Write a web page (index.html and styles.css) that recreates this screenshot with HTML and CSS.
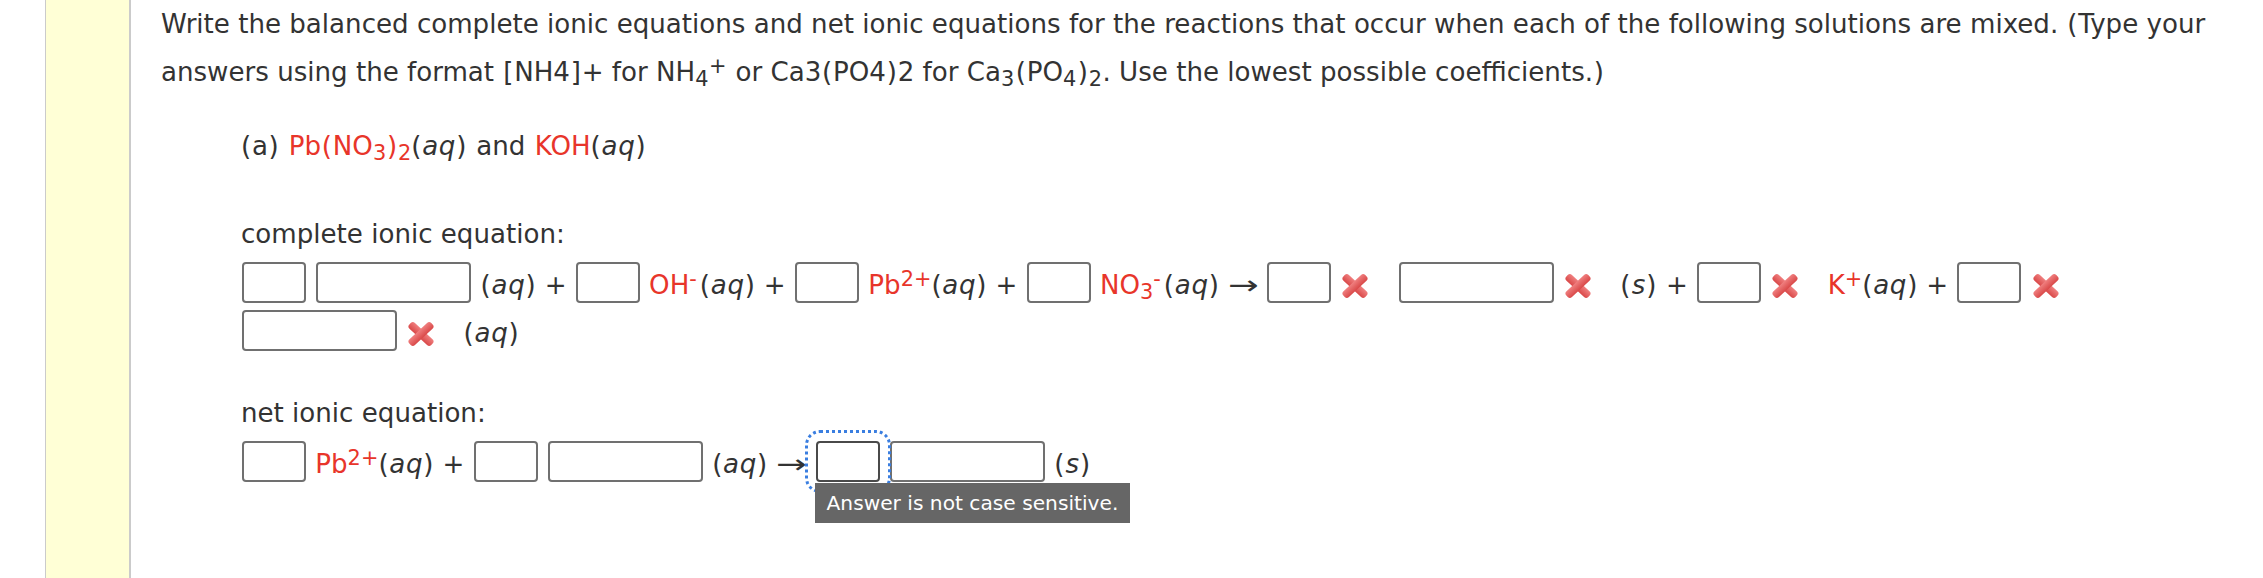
FILE: index.html
```html
<!DOCTYPE html>
<html lang="en">
<head>
<meta charset="utf-8">
<title>Ionic equations</title>
<link rel="stylesheet" href="styles.css">
</head>
<body>
<div class="page">
  <aside class="strip"></aside>
  <main class="content">
    <p class="instructions">Write the balanced complete ionic equations and net ionic equations for the reactions that occur when each of the following solutions are mixed. <span class="par">(</span>Type your answers using the format <span class="par">[</span>NH4<span class="par">]</span>+ for NH<sub>4</sub><sup>+</sup> or Ca3<span class="par">(</span>PO4<span class="par">)</span>2 for Ca<sub>3</sub><span class="par">(</span>PO<sub>4</sub><span class="par">)</span><sub>2</sub>. Use the lowest possible coefficients.<span class="par">)</span></p>
    <section class="part">
      <p class="part-title"><span class="tag">(a)</span> <span class="chem">Pb<span class="par">(</span>NO<sub>3</sub><span class="par">)</span><sub>2</sub></span><span class="state">(<i>aq</i>)</span> and <span class="chem">KOH</span><span class="state">(<i>aq</i>)</span></p>
      <p class="eq-label">complete ionic equation:</p>
      <p class="equation"><span class="box"></span> <span class="box wide"></span> <span class="state">(<i>aq</i>)</span> + <span class="box"></span> <span class="chem">OH<sup class="neg">-</sup></span><span class="state">(<i>aq</i>)</span> + <span class="box"></span> <span class="chem">Pb<sup>2+</sup></span><span class="state">(<i>aq</i>)</span> + <span class="box"></span> <span class="chem">NO<sub>3</sub><sup class="neg">-</sup></span><span class="state">(<i>aq</i>)</span> <span class="arrow">&rarr;</span> <span class="box"></span> <span class="wrong"></span> <span class="box wide"></span> <span class="wrong"></span> <span class="state solid">(<i>s</i>)</span> + <span class="box"></span> <span class="wrong"></span> <span class="chem">K<sup>+</sup></span><span class="state">(<i>aq</i>)</span> + <span class="box"></span> <span class="wrong"></span> <span class="box wide"></span> <span class="wrong"></span> <span class="state">(<i>aq</i>)</span></p>
      <p class="eq-label net">net ionic equation:</p>
      <p class="equation net"><span class="box"></span> <span class="chem">Pb<sup>2+</sup></span><span class="state">(<i>aq</i>)</span> + <span class="box"></span> <span class="box wide"></span> <span class="state">(<i>aq</i>)</span> <span class="arrow">&rarr;</span> <span class="box focused"><span class="tooltip">Answer is not case sensitive.</span></span> <span class="box wide"></span> <span class="state solid">(<i>s</i>)</span></p>
    </section>
  </main>
</div>
</body>
</html>
```
FILE: styles.css
```css
html, body {
  margin: 0;
  padding: 0;
  background: #ffffff;
}

body {
  font-family: "DejaVu Sans", Verdana, sans-serif;
  color: #333333;
}

.page {
  display: flex;
  min-height: 578px;
}

.strip {
  flex: none;
  width: 83px;
  margin-left: 45px;
  background: #ffffd6;
  border-left: 1px solid #cbcbcb;
  border-right: 2px solid #cbcbcb;
}

.content {
  flex: 1;
  padding: 0 40px 0 30px;
  font-size: 26.1px;
  line-height: 48px;
}

.content p {
  margin: 0;
}

sub, sup {
  line-height: 0;
  font-size: 0.8em;
}

sub {
  vertical-align: -0.22em;
}

sup {
  vertical-align: 0.38em;
}

.instructions sub,
.instructions sup {
  padding-right: 0.6px;
}

sup.neg {
  padding-right: 3px;
}

.chem {
  color: #e8352a;
}

i {
  font-style: italic;
}

.state,
.tag {
  letter-spacing: 0.7px;
}

.state.solid {
  letter-spacing: 1.1px;
}

.par {
  padding: 0 0.8px;
}

.arrow {
  display: inline-block;
  width: 30px;
  text-align: center;
  transform: scaleX(1.4);
}

.part {
  padding-left: 80px;
}

.part-title {
  margin-top: 26px !important;
  word-spacing: 1px;
}

.eq-label {
  margin-top: 40px !important;
}

.eq-label.net {
  margin-top: 32px !important;
}

.equation {
  margin-top: 3px !important;
}

.equation.net {
  margin-top: 3px !important;
}

.box {
  display: inline-block;
  box-sizing: border-box;
  width: 64px;
  height: 41px;
  margin: 0 1px;
  border: 2px solid #707070;
  border-radius: 4px;
  background: #ffffff;
  vertical-align: -9px;
}

.box.wide {
  width: 155px;
}

.box.focused {
  position: relative;
  border-color: #4a4a4a;
  outline: 3px dotted #3a7ee0;
  outline-offset: 8px;
}

.tooltip {
  position: absolute;
  z-index: 2;
  left: -3px;
  top: 40px;
  padding: 0 12px;
  background: #666666;
  color: #ffffff;
  font-size: 20.2px;
  line-height: 40px;
  letter-spacing: 0;
  white-space: nowrap;
}

.wrong {
  position: relative;
  display: inline-block;
  width: 26px;
  height: 24px;
  margin: 0 21px 0 2px;
  vertical-align: -4px;
}

.wrong::before,
.wrong::after {
  content: "";
  position: absolute;
  left: 50%;
  top: 50%;
  width: 30px;
  height: 8px;
  margin: -4px 0 0 -15px;
  border-radius: 3px;
  background: linear-gradient(#f08080, #d94848);
  transform: rotate(43deg);
}

.wrong::after {
  transform: rotate(-43deg);
}
```
